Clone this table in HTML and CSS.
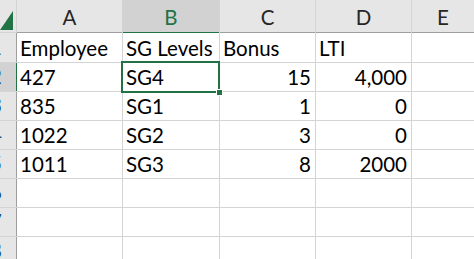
FILE: index.html
```html
<!DOCTYPE html>
<html>
<head>
<meta charset="utf-8">
<link rel="stylesheet" href="styles.css">
</head>
<body>
<div class="sheet">
  <div class="corner"><span class="tri"></span></div>
  <div class="colhead">A</div>
  <div class="colhead active">B</div>
  <div class="colhead">C</div>
  <div class="colhead">D</div>
  <div class="colhead">E</div>

  <div class="rowhead"><span>1</span></div>
  <div class="cell">Employee</div>
  <div class="cell">SG Levels</div>
  <div class="cell">Bonus</div>
  <div class="cell">LTI</div>
  <div class="cell"></div>

  <div class="rowhead active"><span>2</span></div>
  <div class="cell">427</div>
  <div class="cell selected">SG4<span class="handle"></span></div>
  <div class="cell num">15</div>
  <div class="cell num">4,000</div>
  <div class="cell"></div>

  <div class="rowhead"><span>3</span></div>
  <div class="cell">835</div>
  <div class="cell">SG1</div>
  <div class="cell num">1</div>
  <div class="cell num">0</div>
  <div class="cell"></div>

  <div class="rowhead"><span>4</span></div>
  <div class="cell">1022</div>
  <div class="cell">SG2</div>
  <div class="cell num">3</div>
  <div class="cell num">0</div>
  <div class="cell"></div>

  <div class="rowhead"><span>5</span></div>
  <div class="cell">1011</div>
  <div class="cell">SG3</div>
  <div class="cell num">8</div>
  <div class="cell num">2000</div>
  <div class="cell"></div>

  <div class="rowhead"><span>6</span></div>
  <div class="cell"></div><div class="cell"></div><div class="cell"></div><div class="cell"></div><div class="cell"></div>

  <div class="rowhead"><span>7</span></div>
  <div class="cell"></div><div class="cell"></div><div class="cell"></div><div class="cell"></div><div class="cell"></div>

  <div class="rowhead"><span>8</span></div>
  <div class="cell"></div><div class="cell"></div><div class="cell"></div><div class="cell"></div><div class="cell"></div>
</div>
</body>
</html>
```
FILE: styles.css
```css
html, body {
  margin: 0;
  padding: 0;
  background: #ffffff;
  overflow: hidden;
}
.sheet {
  display: grid;
  grid-template-columns: 16px 105px 96px 95px 95px 62px;
  grid-template-rows: 32px 29px repeat(7, 28px);
  gap: 1px;
  background: #d4d4d4;
  width: 474px;
  height: 259px;
  overflow: hidden;
  font-family: Lato, "Liberation Sans", sans-serif;
  font-size: 20.5px;
  line-height: 1;
  color: #000;
}
.corner {
  background: #e6e6e6;
  position: relative;
  border-bottom: 0;
}
.corner .tri {
  position: absolute;
  right: 3px;
  bottom: 2px;
  width: 0;
  height: 0;
  border-left: 13px solid transparent;
  border-bottom: 19px solid #217346;
}
.colhead {
  background: #e6e6e6;
  display: flex;
  align-items: center;
  justify-content: center;
  color: #262626;
  box-shadow: 0 1px 0 #9e9e9e;
  padding-top: 3px;
}
.colhead.active {
  background: #d2d2d2;
  color: #217346;
  box-shadow: 0 2px 0 #217346;
}
.rowhead {
  background: #e6e6e6;
  display: flex;
  align-items: flex-end;
  justify-content: flex-end;
  overflow: hidden;
  padding-right: 14px;
  padding-bottom: 5px;
  color: #1f4e79;
  box-shadow: 1px 0 0 #9e9e9e;
  box-sizing: border-box;
}
.rowhead.active {
  background: #d2d2d2;
  box-shadow: 2px 0 0 #217346;
}
.cell {
  background: #ffffff;
  display: flex;
  align-items: flex-end;
  padding: 0 0 4px 3px;
  white-space: nowrap;
  box-sizing: border-box;
}
.cell.num {
  justify-content: flex-end;
  padding: 0 4px 4px 0;
}
.cell.selected {
  position: relative;
}
.cell.selected::after {
  content: "";
  position: absolute;
  left: -2px;
  top: -2px;
  right: -1px;
  bottom: -2px;
  border: 2px solid #217346;
  pointer-events: none;
}
.handle {
  position: absolute;
  right: -4px;
  bottom: -5px;
  width: 5px;
  height: 5px;
  background: #217346;
  border: 1px solid #ffffff;
  z-index: 2;
}
```
